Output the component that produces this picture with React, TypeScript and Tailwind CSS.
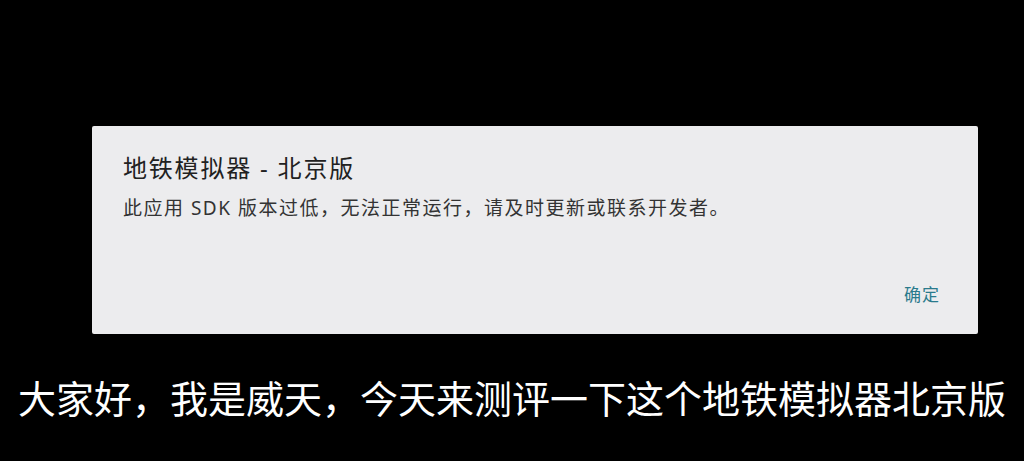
export default function App() {
  return (
    <div
      className="w-[1024px] h-[461px] bg-black overflow-hidden flex flex-col"
      style={{ fontFamily: '"Noto Sans", "Noto Sans CJK SC", sans-serif' }}
    >
      {/* Alert dialog */}
      <div className="ml-[92px] mt-[126px] w-[886px] h-[208px] bg-[#ececee] rounded-[2px] flex flex-col pl-[31px] pr-[38px] pt-[26px] pb-[27px]">
        <h2 className="text-[24px] leading-[32px] tracking-[1.8px] text-[#212121] font-normal">
          地铁模拟器 - 北京版
        </h2>
        <p className="mt-[10px] text-[19px] leading-[28px] tracking-[1.5px] text-[#333333]">
          此应用 SDK 版本过低，无法正常运行，请及时更新或联系开发者。
        </p>
        <div className="mt-auto flex justify-end">
          <button className="text-[17px] leading-[24px] tracking-[1px] text-[#2a7a8c]">确定</button>
        </div>
      </div>

      {/* Subtitle */}
      <div className="mt-[40px] text-center text-white text-[38px] leading-[48px] font-normal whitespace-nowrap">
        大家好，我是威天，今天来测评一下这个地铁模拟器北京版
      </div>
    </div>
  )
}
